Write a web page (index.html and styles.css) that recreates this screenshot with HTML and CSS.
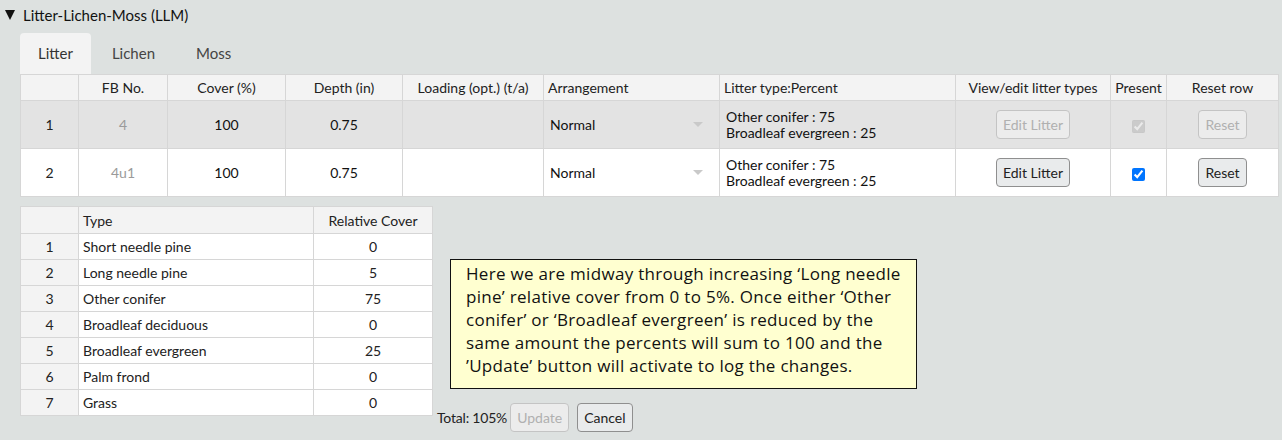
FILE: index.html
```html
<!DOCTYPE html>
<html>
<head>
<meta charset="utf-8">
<link rel="stylesheet" href="styles.css">
</head>
<body>
<div class="page">
  <div class="section-title"><span class="caret-down"></span>Litter-Lichen-Moss (LLM)</div>
  <div class="tabs">
    <div class="tab active">Litter</div>
    <div class="tab">Lichen</div>
    <div class="tab">Moss</div>
  </div>
  <table class="grid main">
    <colgroup>
      <col style="width:58px"><col style="width:89px"><col style="width:118px"><col style="width:117px"><col style="width:141px"><col style="width:176px"><col style="width:236px"><col style="width:155px"><col style="width:56px"><col style="width:112px">
    </colgroup>
    <thead>
      <tr>
        <th></th><th>FB No.</th><th>Cover (%)</th><th>Depth (in)</th><th>Loading (opt.) (t/a)</th><th class="left">Arrangement</th><th class="left">Litter type:Percent</th><th>View/edit litter types</th><th>Present</th><th>Reset row</th>
      </tr>
    </thead>
    <tbody>
      <tr class="selected">
        <td>1</td><td class="muted">4</td><td class="num">100</td><td class="num">0.75</td><td></td>
        <td><div class="select">Normal<span class="caret"></span></div></td>
        <td class="types">Other conifer : 75<br>Broadleaf evergreen : 25</td>
        <td><button class="btn" disabled>Edit Litter</button></td>
        <td><input type="checkbox" checked disabled></td>
        <td><button class="btn" disabled>Reset</button></td>
      </tr>
      <tr>
        <td>2</td><td class="muted">4u1</td><td class="num">100</td><td class="num">0.75</td><td></td>
        <td><div class="select">Normal<span class="caret"></span></div></td>
        <td class="types">Other conifer : 75<br>Broadleaf evergreen : 25</td>
        <td><button class="btn">Edit Litter</button></td>
        <td><input type="checkbox" checked></td>
        <td><button class="btn">Reset</button></td>
      </tr>
    </tbody>
  </table>
  <div class="editor">
    <table class="grid sub">
      <colgroup><col style="width:58px"><col style="width:235px"><col style="width:119px"></colgroup>
      <thead>
        <tr><th></th><th class="left">Type</th><th>Relative Cover</th></tr>
      </thead>
      <tbody>
        <tr><td class="idx">1</td><td class="left">Short needle pine</td><td>0</td></tr>
        <tr><td class="idx">2</td><td class="left">Long needle pine</td><td>5</td></tr>
        <tr><td class="idx">3</td><td class="left">Other conifer</td><td>75</td></tr>
        <tr><td class="idx">4</td><td class="left">Broadleaf deciduous</td><td>0</td></tr>
        <tr><td class="idx">5</td><td class="left">Broadleaf evergreen</td><td>25</td></tr>
        <tr><td class="idx">6</td><td class="left">Palm frond</td><td>0</td></tr>
        <tr><td class="idx">7</td><td class="left">Grass</td><td>0</td></tr>
      </tbody>
    </table>
    <div class="actions">
      <span class="total">Total: 105%</span>
      <button class="btn" disabled>Update</button>
      <button class="btn">Cancel</button>
    </div>
  </div>
  <div class="note">Here we are midway through increasing ‘Long needle<br>pine’ relative cover from 0 to 5%. Once either ‘Other<br>conifer’ or ‘Broadleaf evergreen’ is reduced by the<br>same amount the percents will sum to 100 and the<br>’Update’ button will activate to log the changes.</div>
</div>
</body>
</html>
```
FILE: styles.css
```css
html, body {
  margin: 0;
  padding: 0;
  background: #dde1e0;
}
body {
  font-family: "Lato", "Open Sans", sans-serif;
  color: #222;
  font-size: 14px;
}
.page {
  position: relative;
  height: 440px;
  overflow: hidden;
}
.section-title {
  display: flex;
  align-items: center;
  height: 30px;
  padding-left: 5px;
  font-size: 15px;
  color: #111;
}
.caret-down {
  width: 0;
  height: 0;
  border-left: 5px solid transparent;
  border-right: 5px solid transparent;
  border-top: 10px solid #111;
  margin-right: 8px;
}
.tabs {
  display: flex;
  margin-left: 20px;
  margin-top: 3px;
  height: 41px;
}
.tab {
  padding: 0 20px 0 21px;
  line-height: 41px;
  font-size: 15px;
  color: #444;
}
.tab.active {
  background: #f3f3f3;
  border-radius: 4px 4px 0 0;
  color: #333;
  padding: 0 18px;
}
.grid {
  border-collapse: collapse;
  table-layout: fixed;
  background: #fff;
}
.grid th, .grid td {
  border: 1px solid #d6d6d6;
  text-align: center;
  padding: 0 4px;
  overflow: hidden;
  white-space: nowrap;
}
.grid th {
  background: #f3f3f3;
  font-weight: normal;
  color: #222;
  font-size: 14px;
}
.grid .left { text-align: left; }
.main {
  margin-left: 20px;
  width: 1258px;
}
.main thead tr { height: 26px; }
.main tbody tr { height: 48px; }
.main tr.selected td { background: #e3e3e3; }
.main td.muted { color: #9a9a9a; }
.main td.num { color: #111; }
.main td.types {
  text-align: left;
  line-height: 16px;
  padding-left: 6px;
  color: #111;
}
.select {
  display: flex;
  align-items: center;
  justify-content: space-between;
  padding: 0 12px 0 2px;
  text-align: left;
  color: #111;
}
.caret {
  width: 0;
  height: 0;
  border-left: 5px solid transparent;
  border-right: 5px solid transparent;
  border-top: 5px solid #c9c9c9;
}
.btn {
  font-family: inherit;
  font-size: 14px;
  color: #222;
  background: #e9ebec;
  border: 1px solid #8f8f8f;
  border-radius: 4px;
  height: 29px;
  padding: 0 6px;
}
.btn:disabled {
  color: #b0b0b0;
  border-color: #c4c4c4;
  background: #ececec;
}
input[type="checkbox"] {
  width: 13px;
  height: 13px;
  margin: 0;
  vertical-align: middle;
}
.editor {
  display: flex;
  align-items: flex-end;
  margin: 9px 0 0 20px;
}
.sub { width: 412px; }
.sub thead tr { height: 27px; }
.sub tbody tr { height: 26px; }
.sub td.idx { background: #f3f3f3; }
.sub .left { padding-left: 4px; }
.actions {
  display: flex;
  align-items: center;
  gap: 8px;
  margin-left: 4px;
  margin-bottom: -16px;
}
.total { margin-right: -5px; letter-spacing: -0.2px; }
.note {
  position: absolute;
  left: 450px;
  top: 259px;
  width: 435px;
  height: 116px;
  padding: 2px 15px 10px 15px;
  background: #ffffd0;
  border: 1px solid #111;
  font-family: "Open Sans", sans-serif;
  font-size: 17px;
  letter-spacing: 0.3px;
  line-height: 23px;
  color: #111;
  white-space: nowrap;
}
```
